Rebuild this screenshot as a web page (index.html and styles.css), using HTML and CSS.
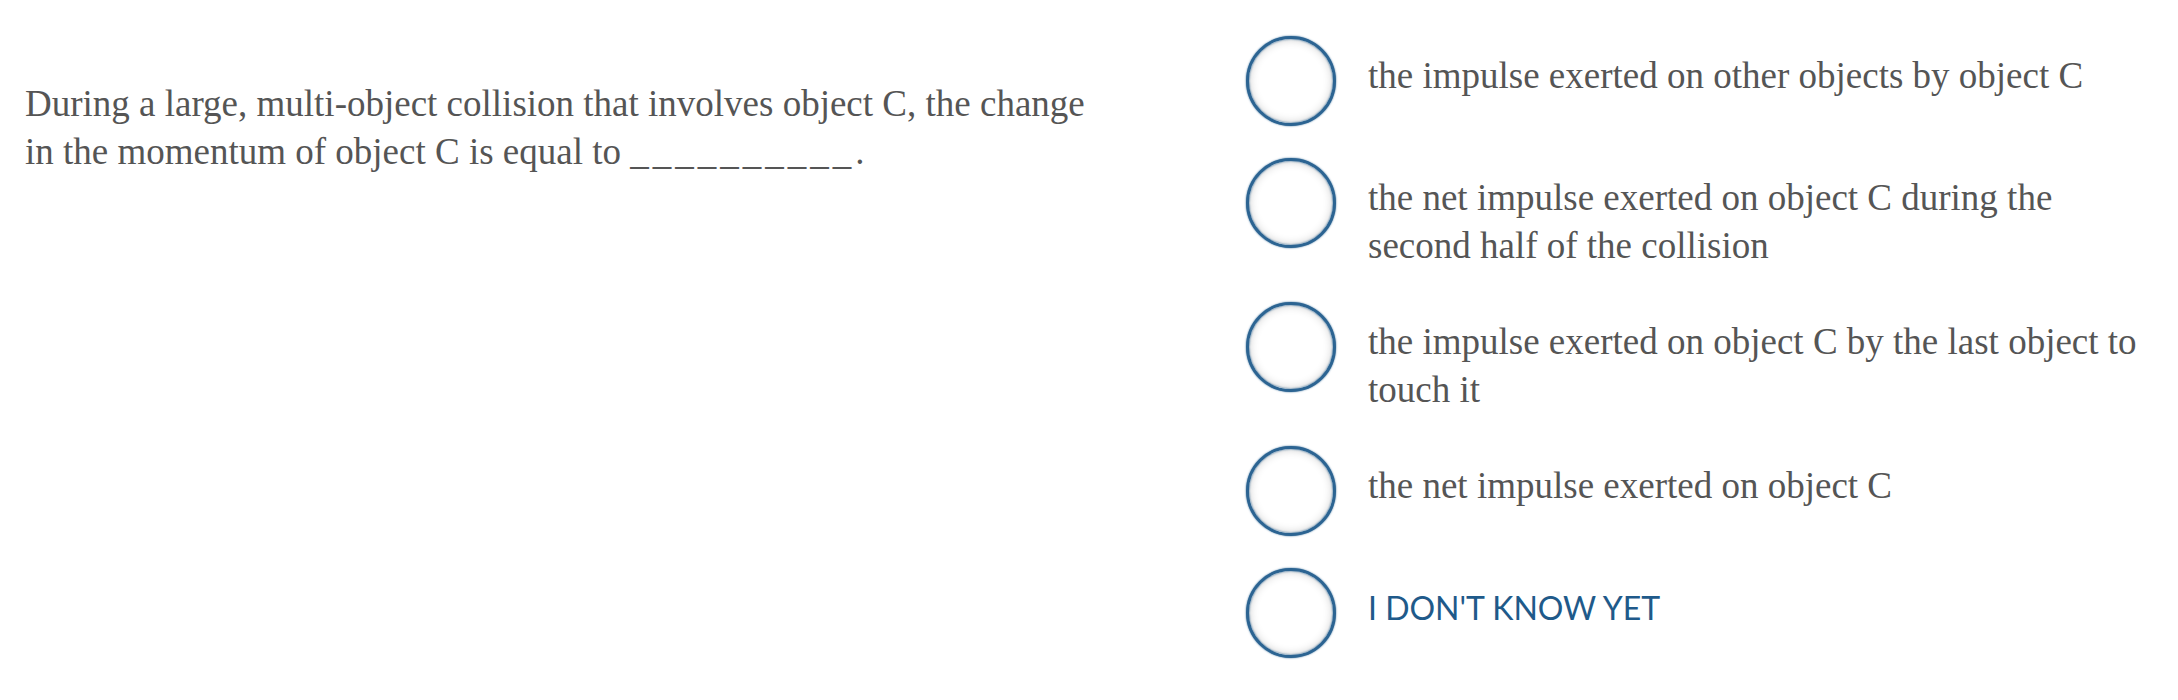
FILE: index.html
```html
<!DOCTYPE html>
<html>
<head>
<meta charset="utf-8">
<link rel="stylesheet" href="styles.css">
</head>
<body>
<div class="page">
  <div class="question">
    <p class="prompt">During a large, multi-object collision that involves object C, the change in the momentum of object C is equal to <span class="blank">__________</span>.</p>
  </div>
  <div class="answers">
    <label class="option"><span class="radio"></span><span class="text">the impulse exerted on other objects by object C</span></label>
    <label class="option"><span class="radio"></span><span class="text">the net impulse exerted on object C during the second half of the collision</span></label>
    <label class="option"><span class="radio"></span><span class="text">the impulse exerted on object C by the last object to touch it</span></label>
    <label class="option"><span class="radio"></span><span class="text">the net impulse exerted on object C</span></label>
    <label class="option"><span class="radio"></span><span class="text dunno">I DON'T KNOW YET</span></label>
  </div>
</div>
</body>
</html>
```
FILE: styles.css
```css
html, body {
  margin: 0;
  padding: 0;
  background: #ffffff;
}
.page {
  display: flex;
  width: 2178px;
  height: 700px;
  font-family: "Liberation Serif", "Times New Roman", serif;
  color: #555555;
}
.question {
  flex: 0 0 1246px;
  box-sizing: border-box;
  padding: 80px 0 0 25px;
}
.prompt {
  margin: 0;
  max-width: 1075px;
  font-size: 37px;
  line-height: 48px;
}
.blank {
  letter-spacing: 4px;
}
.answers {
  flex: 1;
  padding: 36px 25px 0 0;
  display: flex;
  flex-direction: column;
  gap: 32px;
}
.option {
  display: flex;
  align-items: flex-start;
  gap: 32px;
}
.radio {
  flex: 0 0 90px;
  width: 90px;
  height: 90px;
  box-sizing: border-box;
  border-radius: 50%;
  border: 3px solid #2c6492;
  background: #ffffff;
  box-shadow: inset 0 0 2px #2c6492, inset 0 0 10px rgba(0, 0, 0, 0.2), 0 0 2px #2c6492;
}
.text {
  padding-top: 16px;
  font-size: 37px;
  line-height: 48px;
}
.dunno {
  font-family: Lato, "Liberation Sans", sans-serif;
  font-size: 32px;
  color: #1f5a8a;
}
```
